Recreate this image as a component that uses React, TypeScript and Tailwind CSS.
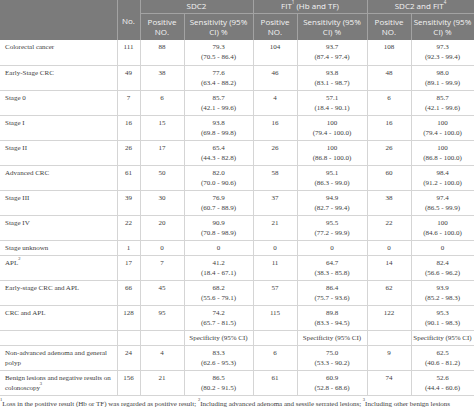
import React from "react";

type Row = string[];

const rows: Row[] = [
  ["Colorectal cancer", "111", "88", "79.3", "(70.5 - 86.4)", "104", "93.7", "(87.4 - 97.4)", "108", "97.3", "(92.3 - 99.4)"],
  ["Early-Stage CRC", "49", "38", "77.6", "(63.4 - 88.2)", "46", "93.8", "(83.1 - 98.7)", "48", "98.0", "(89.1 - 99.9)"],
  ["Stage 0", "7", "6", "85.7", "(42.1 - 99.6)", "4", "57.1", "(18.4 - 90.1)", "6", "85.7", "(42.1 - 99.6)"],
  ["Stage I", "16", "15", "93.8", "(69.8 - 99.8)", "16", "100", "(79.4 - 100.0)", "16", "100", "(79.4 - 100.0)"],
  ["Stage II", "26", "17", "65.4", "(44.3 - 82.8)", "26", "100", "(86.8 - 100.0)", "26", "100", "(86.8 - 100.0)"],
  ["Advanced CRC", "61", "50", "82.0", "(70.0 - 90.6)", "58", "95.1", "(86.3 - 99.0)", "60", "98.4", "(91.2 - 100.0)"],
  ["Stage III", "39", "30", "76.9", "(60.7 - 88.9)", "37", "94.9", "(82.7 - 99.4)", "38", "97.4", "(86.5 - 99.9)"],
  ["Stage IV", "22", "20", "90.9", "(70.8 - 98.9)", "21", "95.5", "(77.2 - 99.9)", "22", "100", "(84.6 - 100.0)"],
  ["Stage unknown", "1", "0", "0", "", "0", "0", "", "0", "0", ""],
  ["APL|2", "17", "7", "41.2", "(18.4 - 67.1)", "11", "64.7", "(38.3 - 85.8)", "14", "82.4", "(56.6 - 96.2)"],
  ["Early-stage CRC and APL", "66", "45", "68.2", "(55.6 - 79.1)", "57", "86.4", "(75.7 - 93.6)", "62", "93.9", "(85.2 - 98.3)"],
  ["CRC and APL", "128", "95", "74.2", "(65.7 - 81.5)", "115", "89.8", "(83.3 - 94.5)", "122", "95.3", "(90.1 - 98.3)"],
  ["SPEC"],
  ["Non-advanced adenoma and general|polyp", "24", "4", "83.3", "(62.6 - 95.3)", "6", "75.0", "(53.3 - 90.2)", "9", "62.5", "(40.6 - 81.2)"],
  ["Benign lesions and negative results on|colonoscopy|3", "156", "21", "86.5", "(80.2 - 91.5)", "61", "60.9", "(52.8 - 68.6)", "74", "52.6", "(44.4 - 60.6)"],
];

const serif = { fontFamily: '"Liberation Serif", "Times New Roman", serif' };

const bodyCell =
  "border-r border-b border-[#d5d5d5] align-top text-center px-0 pt-[2px] pb-[2px] leading-[10px] text-[7px] text-[#3d3d3d] whitespace-nowrap overflow-hidden";
const headCell =
  "border-r border-[#a3a3a3] align-top text-center text-[#f4f4f4] text-[8px] leading-[10px] bg-[#7b7b7b] whitespace-nowrap";
const supCls = "text-[4.5px] leading-none relative -top-[1px] align-super";

function Label({ text }: { text: string }) {
  if (text === "APL|2")
    return (
      <>
        APL<sup className={supCls}>2</sup>
      </>
    );
  if (text.startsWith("Non-advanced"))
    return (
      <>
        Non-advanced adenoma and general
        <br />
        polyp
      </>
    );
  if (text.startsWith("Benign"))
    return (
      <span className="tracking-[-0.05px]">
        Benign lesions and negative results on
        <br />
        colonoscopy<sup className={supCls}>3</sup>
      </span>
    );
  return <>{text}</>;
}

function Two({ a, b }: { a: string; b: string }) {
  return (
    <>
      {a}
      {b && (
        <>
          <br />
          {b}
        </>
      )}
    </>
  );
}

const headTwo = (a: string, b: string) => (
  <>
    {a}
    <br />
    {b}
  </>
);

export default function App() {
  return (
    <div className="w-[474px] h-[407px] overflow-hidden bg-white">
      <table className="table-fixed border-collapse w-[474px]" style={serif}>
        <colgroup>
          <col className="w-[117px]" />
          <col className="w-[23px]" />
          <col className="w-[44px]" />
          <col className="w-[69px]" />
          <col className="w-[44px]" />
          <col className="w-[70px]" />
          <col className="w-[44px]" />
          <col className="w-[63px]" />
        </colgroup>
        <thead style={{ fontFamily: '"Open Sans", "Noto Sans", sans-serif' }}>
          <tr className="h-[13px]">
            <th className={headCell}></th>
            <th className={headCell}></th>
            <th colSpan={2} className={`${headCell} border-b font-normal leading-[12px]`}>
              SDC2
            </th>
            <th colSpan={2} className={`${headCell} border-b font-normal leading-[12px]`}>
              FIT<sup className={supCls}>1</sup> (Hb and TF)
            </th>
            <th colSpan={2} className={`${headCell} border-b font-normal leading-[12px]`}>
              SDC2 and FIT<sup className={supCls}>4</sup>
            </th>
          </tr>
          <tr className="h-[27px]">
            <th className={`${headCell} font-normal`}></th>
            <th className={`${headCell} font-normal pt-[3px]`}>No.</th>
            <th className={`${headCell} font-normal pt-[3px]`}>{headTwo("Positive", "NO.")}</th>
            <th className={`${headCell} font-normal pt-[3px]`}>{headTwo("Sensitivity (95%", "CI) %")}</th>
            <th className={`${headCell} font-normal pt-[3px]`}>{headTwo("Positive", "NO.")}</th>
            <th className={`${headCell} font-normal pt-[3px]`}>{headTwo("Sensitivity (95%", "CI) %")}</th>
            <th className={`${headCell} font-normal pt-[3px]`}>{headTwo("Positive", "NO.")}</th>
            <th className={`${headCell} font-normal pt-[3px]`}>{headTwo("Sensitivity (95%", "CI) %")}</th>
          </tr>
        </thead>
        <tbody>
          {rows.map((r, i) => {
            if (r[0] === "SPEC") {
              return (
                <tr key={i} className="h-[14px]">
                  <td className={bodyCell}></td>
                  <td className={bodyCell}></td>
                  <td className={bodyCell}></td>
                  <td className={bodyCell}>Specificity (95% CI)</td>
                  <td className={bodyCell}></td>
                  <td className={bodyCell}>Specificity (95% CI)</td>
                  <td className={bodyCell}></td>
                  <td className={bodyCell}>Specificity (95% CI)</td>
                </tr>
              );
            }
            const single = r[4] === "";
            return (
              <tr key={i} className={single ? "h-[14px]" : "h-[25px]"}>
                <td className={`${bodyCell} text-left pl-[5px]`}>
                  <Label text={r[0]} />
                </td>
                <td className={bodyCell}>{r[1]}</td>
                <td className={bodyCell}>{r[2]}</td>
                <td className={bodyCell}>
                  <Two a={r[3]} b={r[4]} />
                </td>
                <td className={bodyCell}>{r[5]}</td>
                <td className={bodyCell}>
                  <Two a={r[6]} b={r[7]} />
                </td>
                <td className={bodyCell}>{r[8]}</td>
                <td className={bodyCell}>
                  <Two a={r[9]} b={r[10]} />
                </td>
              </tr>
            );
          })}
        </tbody>
      </table>
      <div className="pt-[3px] text-[7px] leading-[10px] text-[#3d3d3d] whitespace-nowrap" style={serif}>
        <sup className={supCls}>1</sup>Loss in the positive result (Hb or TF) was regarded as positive result; <sup className={supCls}>2</sup>Including advanced adenoma and sessile serrated lesions; <sup className={supCls}>3</sup>Including other benign lesions
      </div>
    </div>
  );
}
